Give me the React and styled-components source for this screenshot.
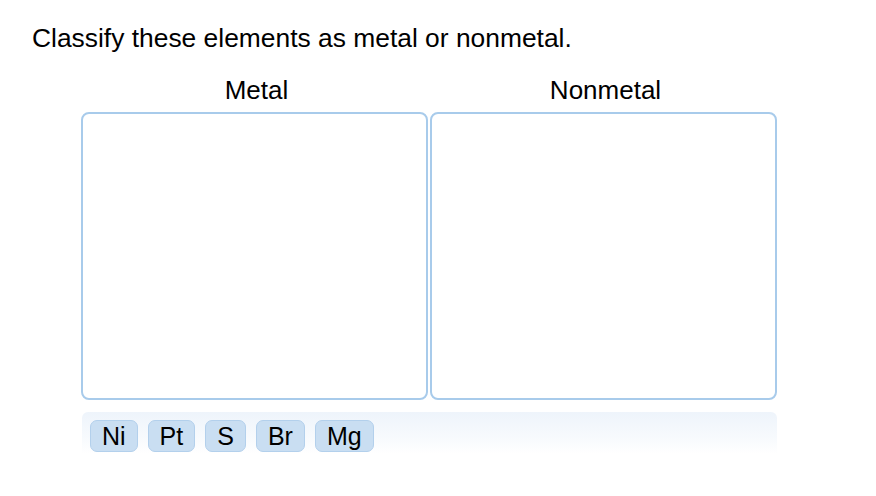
import React from 'react'
import styled, { createGlobalStyle } from 'styled-components'

const GlobalStyle = createGlobalStyle`
    body {
        margin: 0;
        background: #ffffff;
        font-family: "Liberation Sans", Arial, sans-serif;
        color: #000000;
    }
`;

const Page = styled.div`
    width: 876px;
    height: 496px;
    padding: 22px 0 0 32px;
    box-sizing: border-box;
`;

const Prompt = styled.div`
    font-size: 26.4px;
    line-height: 32px;
`;

const Board = styled.div`
    margin-top: 20px;
    margin-left: 49px;
    width: 696px;
`;

const Columns = styled.div`
    display: grid;
    grid-template-columns: 347px 347px;
    column-gap: 2px;
`;

const Column = styled.div`
    display: flex;
    flex-direction: column;
`;

const Heading = styled.div`
    font-size: 26px;
    line-height: 32px;
    text-align: center;
    padding-left: 4px;
    margin-bottom: 6px;
`;

const DropZone = styled.div`
    height: 288px;
    border: 2px solid #a8cbeb;
    border-radius: 8px;
    box-sizing: border-box;
    background: #ffffff;
`;

const Tray = styled.div`
    margin-top: 12px;
    margin-left: 1px;
    display: flex;
    gap: 10px;
    padding: 8px 8px 0;
    height: 42px;
    box-sizing: border-box;
    border-radius: 6px 6px 0 0;
    background: linear-gradient(to bottom, #eef4fb 0%, #f7fafd 60%, #ffffff 100%);
`;

const Chip = styled.div`
    height: 32px;
    padding: 0 11px;
    box-sizing: border-box;
    display: flex;
    align-items: center;
    font-size: 25px;
    background: #c9def2;
    border: 1px solid #b3d0ec;
    border-radius: 7px;
`;

const metals = ['Ni', 'Pt', 'S', 'Br', 'Mg']

const App = () => {
    return (
        <Page>
            <GlobalStyle />
            <Prompt>Classify these elements as metal or nonmetal.</Prompt>
            <Board>
                <Columns>
                    <Column>
                        <Heading>Metal</Heading>
                        <DropZone />
                    </Column>
                    <Column>
                        <Heading>Nonmetal</Heading>
                        <DropZone />
                    </Column>
                </Columns>
                <Tray>
                    {metals.map((m) => (
                        <Chip key={m}>{m}</Chip>
                    ))}
                </Tray>
            </Board>
        </Page>
    )
}

export default App
